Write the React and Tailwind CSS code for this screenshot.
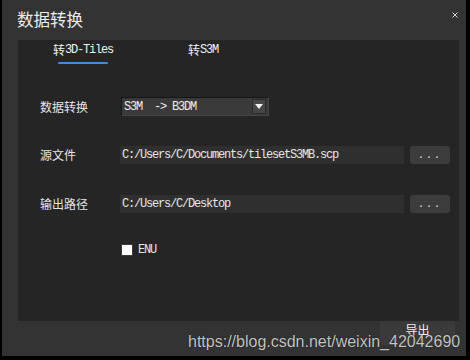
import { useState } from 'react'

const mono = { fontFamily: '"Liberation Mono", "Noto Sans CJK SC", monospace' }
const cjk = { fontFamily: '"Noto Sans CJK SC", "Liberation Sans", sans-serif' }

function Field({ value }) {
    return (
        <div className="flex items-center gap-[6px]">
            <div className="w-[284px] h-[18px] bg-[#2f2f2f] flex items-center pl-[2px] text-[12px] tracking-[-1.2px] text-[#e6e6e6]" style={mono}>
                {value}
            </div>
            <button className="w-[40px] h-[18px] rounded-[3px] bg-[#3c3c3c] text-[#e6e6e6] text-[10px] tracking-[2px] leading-none pt-[2px]" style={mono}>...</button>
        </div>
    )
}

export default function App() {
    const [tab, setTab] = useState(0)
    const [enu, setEnu] = useState(false)

    return (
        <div className="relative w-[470px] h-[360px] bg-black pl-[2px] overflow-hidden">
            <div className="w-[464px] h-[356px] bg-[#333333] flex flex-col">

                {/* Title bar */}
                <div className="relative h-[40px] flex items-center pl-[15px] pb-[2px]">
                    <span className="text-[16.5px] text-[#ececec]" style={cjk}>数据转换</span>
                    <svg className="absolute left-[450px] top-[12px]" width="6" height="6" viewBox="0 0 6 6">
                        <path d="M0.5 0.5 L5.5 5.5 M5.5 0.5 L0.5 5.5" stroke="#d0d0d0" strokeWidth="1" />
                    </svg>
                </div>

                {/* Panel */}
                <div className="ml-[16px] w-[441px] h-[281px] bg-[#252525] flex flex-col">
                    <div className="flex pl-[35px] h-[24px]">
                        {['3D-Tiles', 'S3M'].map((t, i) => (
                            <div key={t} className={`flex flex-col cursor-pointer ${i === 0 ? 'w-[60px] mr-[75px]' : 'w-[40px]'}`} onClick={() => setTab(i)}>
                                <div className="h-[20px] flex items-center text-[12px] text-[#f0f0f0] whitespace-nowrap">
                                    <span className="text-[12px]" style={cjk}>转</span>
                                    <span className="tracking-[-1.2px]" style={mono}>{t}</span>
                                </div>
                                {tab === i && <div className="mt-[2px] mx-auto w-[50px] h-[2px] bg-[#3a8ee0] rounded-full" />}
                            </div>
                        ))}
                    </div>

                    {/* Rows */}
                    <div className="flex flex-col pl-[22px]">
                        <div className="mt-[33px] flex items-center h-[19px]">
                            <span className="w-[80px] text-[12px] text-[#e6e6e6]" style={cjk}>数据转换</span>
                            <div className="ml-[1px] w-[148px] h-[19px] bg-[#3a3a3a] border-t border-l border-t-[#161616] border-l-[#161616] border-b border-r border-b-[#444] border-r-[#444] flex items-center justify-between pl-[2px] pr-[2px]">
                                <span className="text-[12px] tracking-[-1.2px] text-[#ececec] whitespace-pre" style={mono}>S3M  -&gt; B3DM</span>
                                <div className="w-[14px] h-[15px] bg-[#474747] border border-[#2a2a2a] flex items-center justify-center">
                                    <svg width="8" height="5" viewBox="0 0 8 5"><path d="M0 0 H8 L4 5 Z" fill="#f2f2f2" /></svg>
                                </div>
                            </div>
                        </div>

                        <div className="mt-[30px] flex items-center">
                            <span className="w-[80px] text-[12px] text-[#e6e6e6]" style={cjk}>源文件</span>
                            <Field value="C:/Users/C/Documents/tilesetS3MB.scp" />
                        </div>

                        <div className="mt-[31px] flex items-center">
                            <span className="w-[80px] text-[12px] text-[#e6e6e6]" style={cjk}>输出路径</span>
                            <Field value="C:/Users/C/Desktop" />
                        </div>

                        <div className="mt-[31px] flex items-center pl-[80px] h-[12px]">
                            <div className={`ml-[1px] w-[12px] h-[12px] border border-[#3a3a3a] ${enu ? 'bg-[#3a8ee0]' : 'bg-white'}`} onClick={() => setEnu(!enu)} />
                            <span className="ml-[5px] text-[12px] tracking-[-1.2px] text-[#e6e6e6]" style={mono}>ENU</span>
                        </div>
                    </div>
                </div>

                {/* Footer */}
                <div className="flex justify-end pr-[11px]">
                    <button className="w-[75px] h-[24px] rounded-[3px] bg-[#3a3a3a] text-[12px] text-[#f0f0f0] pb-[6px]" style={cjk}>导出</button>
                </div>
            </div>

            <div className="absolute left-[188px] top-[330px] text-[16px] text-[#c4c4c4] whitespace-nowrap [text-shadow:0_0_1px_#000]" style={{ fontFamily: '"Liberation Sans", Arial, sans-serif' }}>
                https://blog.csdn.net/weixin_42042690
            </div>
        </div>
    )
}
